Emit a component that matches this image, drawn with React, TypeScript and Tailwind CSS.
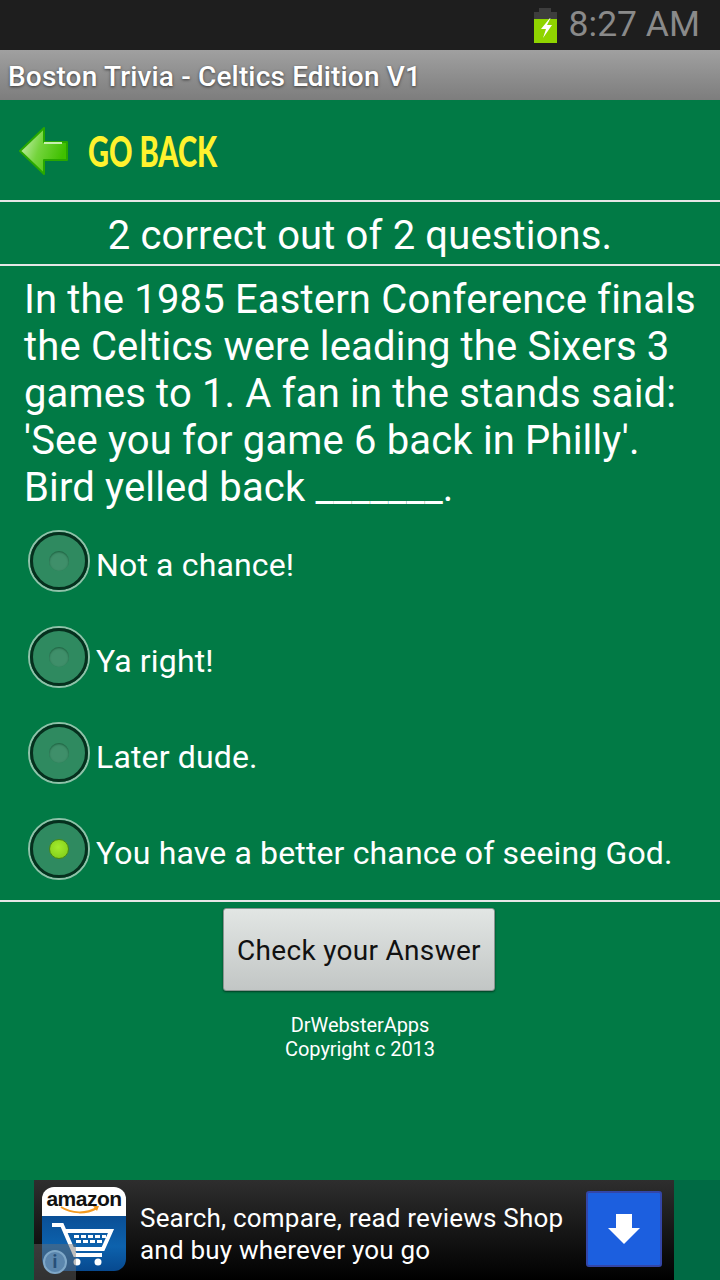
import { useState } from "react";

const answers = [
  "Not a chance!",
  "Ya right!",
  "Later dude.",
  "You have a better chance of seeing God.",
];

function BatteryIcon() {
  return (
    <svg width="23" height="35" viewBox="0 0 23 35" className="block">
      <path d="M5 0h12v4h6v31H0V4h5z" fill="#3d3d3d" />
      <rect x="0" y="11" width="23" height="24" fill="#8fd400" />
      <path d="M16 10 7 21h5l-3 9 9-13h-5l3.500-7z" fill="#fff" />
    </svg>
  );
}

function BackArrow() {
  return (
    <svg width="50" height="50" viewBox="0 0 50 50" className="block">
      <defs>
        <linearGradient id="arrowFill" x1="0" y1="0" x2="1" y2="0.35">
          <stop offset="0" stopColor="#d8f5c8" />
          <stop offset="0.5" stopColor="#74d43c" />
          <stop offset="1" stopColor="#3fc000" />
        </linearGradient>
      </defs>
      <path
        d="M1 25 25 2v14h23v18H25v14z"
        fill="url(#arrowFill)"
        stroke="#28a800"
        strokeWidth="2"
        strokeLinejoin="round"
      />
      <rect x="25" y="16" width="18" height="2" fill="#c8f0b0" />
    </svg>
  );
}

function Radio({ checked }: { checked: boolean }) {
  return (
    <span className="flex h-[62px] w-[62px] items-center justify-center rounded-full border-2 border-[#8fc2a9]">
      <span className="flex h-[58px] w-[58px] items-center justify-center rounded-full border-[3px] border-[#06301e] bg-[#2f8a60]">
        {checked ? (
          <span className="h-5 w-5 rounded-full border border-[#4c8a10] bg-[radial-gradient(circle_at_45%_40%,#a4ec2c,#7cc818)]" />
        ) : (
          <span className="h-5 w-5 rounded-full bg-[#3f8f6a] shadow-[inset_0_1px_2px_rgba(0,60,30,0.6)]" />
        )}
      </span>
    </span>
  );
}

function AmazonIcon() {
  return (
    <div className="mb-[2px] flex h-[84px] w-[84px] flex-col overflow-hidden rounded-xl">
      <div className="relative flex h-[29px] justify-center bg-white">
        <span className="font-['Liberation_Sans',sans-serif] text-[21px] leading-[23px] font-bold tracking-[-0.5px] text-[#111]">
          amazon
        </span>
        <svg width="40" height="10" viewBox="0 0 40 10" className="absolute top-[18px] left-[18px]">
          <path d="M1 2c11 7 25 7 36 1" fill="none" stroke="#f39a1f" strokeWidth="2" />
          <path d="M33 1l6 0-2 5z" fill="#f39a1f" />
        </svg>
      </div>
      <div className="flex-1 bg-[linear-gradient(#0a4f96,#0d62ad_55%,#07498f)]">
        <svg width="84" height="55" viewBox="0 0 84 55">
          <path d="M10 9h10l13 30h27M22 15h47l-8 18H31" fill="none" stroke="#fff" strokeWidth="4" />
          <g fill="#fff">
            <rect x="32" y="19" width="5" height="3" />
            <rect x="39" y="19" width="5" height="3" />
            <rect x="46" y="19" width="5" height="3" />
            <rect x="53" y="19" width="5" height="3" />
            <rect x="60" y="19" width="4" height="3" />
            <rect x="34" y="24" width="5" height="3" />
            <rect x="41" y="24" width="5" height="3" />
            <rect x="48" y="24" width="5" height="3" />
            <rect x="55" y="24" width="5" height="3" />
          </g>
          <circle cx="35" cy="46" r="3.500" fill="#fff" />
          <circle cx="56" cy="46" r="3.500" fill="#fff" />
        </svg>
      </div>
    </div>
  );
}

export default function App() {
  const [selected, setSelected] = useState(3);

  return (
    <div className="flex h-[1280px] w-[720px] flex-col overflow-hidden bg-[#017a45] font-[Roboto,sans-serif] text-white">
      <div className="flex h-[50px] items-center justify-end gap-[12px] bg-[#1e1e1e] pr-[20px]">
        <BatteryIcon />
        <span className="text-[35.5px] leading-none font-normal text-[#8a8a8a]">8:27 AM</span>
      </div>
      <div className="flex h-[50px] items-center bg-[linear-gradient(#a0a0a0,#7d7d7d)] pt-[3px] pl-[8px]">
        <span className="text-[28px] font-medium tracking-[0.16px] [text-shadow:0_1px_3px_rgba(0,0,0,0.6)]">
          Boston Trivia - Celtics Edition V1
        </span>
      </div>

      <div className="flex h-[100px] items-center gap-[19px] pt-[2px] pl-[19px]">
        <BackArrow />
        <span className="origin-left scale-x-[0.69] font-[Lato,sans-serif] text-[42px] font-black text-[#fff22e]">
          GO BACK
        </span>
      </div>
      <div className="flex h-[66px] items-center justify-center border-y-2 border-[#e6e6e6] pt-[5px] text-[40px] tracking-[0.14px]">
        2 correct out of 2 questions.
      </div>

      <p className="pt-[10px] pr-[16px] pl-[24px] text-[40px] leading-[47px] tracking-[0.16px]">
        In the 1985 Eastern Conference finals the Celtics were leading the Sixers 3 games to 1. A fan in the stands
        said: 'See you for game 6 back in Philly'. Bird yelled back _______.
      </p>

      <div className="mt-[2px] flex flex-col pl-[28px]">
        {answers.map((answer, i) => (
          <button
            key={answer}
            onClick={() => setSelected(i)}
            className="flex h-[96px] items-center gap-[6px] text-left text-[32px] tracking-[0.15px]"
          >
            <Radio checked={selected === i} />
            <span className="pt-[8px]">{answer}</span>
          </button>
        ))}
      </div>

      <div className="mt-[3px] h-[2px] bg-[#e6e6e6]" />

      <button className="mt-[6px] ml-[223px] h-[83px] w-[272px] rounded-[3px] border border-[#8a9490] bg-[linear-gradient(#e2e6e4,#c2c6c5)] pt-[2px] text-[28px] tracking-[0.3px] text-[#111] shadow-[0_1px_2px_rgba(0,0,0,0.5)]">
        Check your Answer
      </button>

      <div className="mt-[22px] text-center text-[20px] leading-[24px] tracking-[-0.05px]">
        <div>DrWebsterApps</div>
        <div>Copyright c 2013</div>
      </div>

      <div className="mt-auto flex h-[100px] bg-[#006a44] pl-[34px]">
        <div className="relative flex w-[640px] items-center bg-[linear-gradient(#2e2e2e,#000)] pl-[8px]">
          <AmazonIcon />
          <div className="ml-[14px] flex-1 pt-[8px] text-[26px] leading-[32px] tracking-[0.2px]">
            Search, compare, read reviews Shop
            <br />
            and buy wherever you go
          </div>
          <div className="mr-[12px] mb-[2px] flex h-[76px] w-[76px] items-center justify-center rounded-[3px] border-2 border-[#3346a8] bg-[#1c5fdf]">
            <svg width="32" height="30" viewBox="0 0 32 30">
              <path d="M8 0h16v14h8L16 30 0 14h8z" fill="#fff" />
            </svg>
          </div>
          <div className="absolute bottom-0 left-0 flex h-[36px] w-[42px] items-center justify-center bg-[rgba(110,110,110,0.45)]">
            <span className="flex h-[24px] w-[24px] items-center justify-center rounded-full border-[2px] border-[#7fa8c8] bg-[#5b86ad] text-[18px] leading-none font-bold text-[#274f78]">
              i
            </span>
          </div>
        </div>
      </div>
    </div>
  );
}
